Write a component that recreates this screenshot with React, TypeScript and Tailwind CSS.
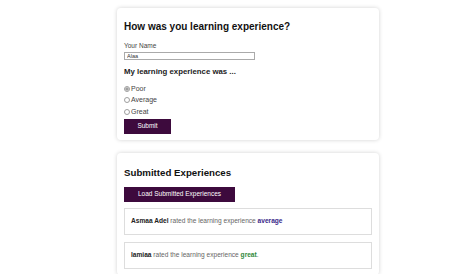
import { useState } from "react";

const font = { fontFamily: '"Liberation Sans", Arial, sans-serif' };

type Entry = { name: string; rating: "poor" | "average" | "great" };

const entries: Entry[] = [
  { name: "Asmaa Adel", rating: "average" },
  { name: "lamiaa", rating: "great" },
];

const ratingColor: Record<Entry["rating"], string> = {
  poor: "text-[#b91c1c]",
  average: "text-[#3b2a8a]",
  great: "text-[#2f8a3a]",
};

function Radio({ label, checked, onChange }: { label: string; checked: boolean; onChange: () => void }) {
  return (
    <label className="flex items-center gap-[1px] h-[11.5px] text-[7px] text-[#444]">
      <input
        type="radio"
        name="rating"
        checked={checked}
        onChange={onChange}
        className="m-0 w-[6px] h-[6px] accent-[#777] opacity-70"
      />
      {label}
    </label>
  );
}

export default function App() {
  const [name, setName] = useState("Alaa");
  const [rating, setRating] = useState("Poor");

  return (
    <div className="min-h-[274px] bg-white flex flex-col items-center pt-[8px] gap-[13px]" style={font}>
      <div className="w-[262px] ml-[22px] bg-white rounded-[4px] shadow-[0_0_4px_rgba(0,0,0,0.18)] px-[7px] pt-[12px] pb-[6px]">
        <h1 className="text-[10px] font-bold text-[#111] leading-[14px]">How was you learning experience?</h1>
        <div className="mt-[8px] text-[6.5px] text-[#444] leading-[8px]">Your Name</div>
        <input
          value={name}
          onChange={(e) => setName(e.target.value)}
          className="mt-[2px] block w-[131px] h-[8px] border border-[#aaa] px-[2px] text-[5.5px] text-[#333] outline-none"
        />
        <h2 className="mt-[6px] text-[7.8px] font-bold text-[#222] leading-[12px]">My learning experience was ...</h2>
        <div className="mt-[5px] flex flex-col">
          {["Poor", "Average", "Great"].map((r) => (
            <Radio key={r} label={r} checked={rating === r} onChange={() => setRating(r)} />
          ))}
        </div>
        <button className="block mt-[1px] w-[47px] h-[15px] bg-[#3d0a3d] text-white text-[6.5px]">Submit</button>
      </div>

      <div className="w-[262px] ml-[22px] bg-white rounded-[4px] shadow-[0_0_4px_rgba(0,0,0,0.18)] px-[7px] pt-[13px] pb-[6px]">
        <h2 className="text-[9.7px] font-bold text-[#111] leading-[14px]">Submitted Experiences</h2>
        <button className="block mt-[7px] w-[111px] h-[15px] bg-[#3d0a3d] text-white text-[6.5px]">
          Load Submitted Experiences
        </button>
        <div className="mt-[6px] flex flex-col gap-[7px]">
          {entries.map((e) => (
            <div key={e.name} className="h-[27px] border border-[#ddd] flex items-center px-[6px] text-[6.6px] text-[#666]">
              <span className="font-bold text-[#222]">{e.name}</span>
              <span>&nbsp;rated the learning experience&nbsp;</span>
              <span className={`font-bold ${ratingColor[e.rating]}`}>{e.rating}</span>
              {e.rating === "great" && <span>.</span>}
            </div>
          ))}
        </div>
      </div>
    </div>
  );
}
